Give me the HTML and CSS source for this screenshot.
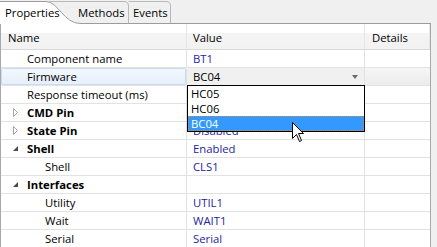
FILE: index.html
```html
<!DOCTYPE html>
<html>
<head>
<meta charset="utf-8">
<link rel="stylesheet" href="styles.css">
</head>
<body>
<div class="tabs">
  <svg class="tab-shapes" width="437" height="24" viewBox="0 0 437 24">
    <path d="M44 1.5 H124 Q128.5 1.5 128.5 6 V23.5" fill="none" stroke="#b8b8b8"/>
    <path d="M128.5 1.5 H166 Q170.5 1.5 170.5 6 V23.5" fill="none" stroke="#b8b8b8"/>
    <path d="M0 24 V1 H46 C58 1 64 23 80 23.5 V24 Z" fill="#ffffff"/>
    <path d="M0 1.5 H46 C58 1.5 64 23.5 80 23.5 H431" fill="none" stroke="#9c9c9c"/>
  </svg>
  <div class="tab tab-props">Properties</div>
  <div class="tab tab-methods">Methods</div>
  <div class="tab tab-events">Events</div>
</div>
<div class="panel">
  <div class="row hdr">
    <div class="cell name">Name</div>
    <div class="cell val">Value</div>
    <div class="cell det">Details</div>
  </div>
  <div class="row">
    <div class="cell name l1">Component name</div>
    <div class="cell val">BT1</div>
    <div class="cell det"></div>
  </div>
  <div class="row sel">
    <div class="cell name l1">Firmware</div>
    <div class="cell val combo"><span>BC04</span><span class="arrow"></span></div>
    <div class="cell det"></div>
  </div>
  <div class="row">
    <div class="cell name l1">Response timeout (ms)</div>
    <div class="cell val"></div>
    <div class="cell det"></div>
  </div>
  <div class="row">
    <div class="cell name l0 bold"><svg class="tw" width="8" height="9" viewBox="0 0 8 9"><path d="M1.5 0.5 L5.5 4.5 L1.5 8.5 Z" fill="none" stroke="#a6a6a6"/></svg>CMD Pin</div>
    <div class="cell val"></div>
    <div class="cell det"></div>
  </div>
  <div class="row">
    <div class="cell name l0 bold"><svg class="tw" width="8" height="9" viewBox="0 0 8 9"><path d="M1.5 0.5 L5.5 4.5 L1.5 8.5 Z" fill="none" stroke="#a6a6a6"/></svg>State Pin</div>
    <div class="cell val">Disabled</div>
    <div class="cell det"></div>
  </div>
  <div class="row">
    <div class="cell name l0 bold"><svg class="tw" width="8" height="9" viewBox="0 0 8 9"><path d="M6 2 L6 7 L1 7 Z" fill="#4a4a4a"/></svg>Shell</div>
    <div class="cell val">Enabled</div>
    <div class="cell det"></div>
  </div>
  <div class="row">
    <div class="cell name l2">Shell</div>
    <div class="cell val">CLS1</div>
    <div class="cell det"></div>
  </div>
  <div class="row">
    <div class="cell name l0 bold"><svg class="tw" width="8" height="9" viewBox="0 0 8 9"><path d="M6 2 L6 7 L1 7 Z" fill="#4a4a4a"/></svg>Interfaces</div>
    <div class="cell val"></div>
    <div class="cell det"></div>
  </div>
  <div class="row">
    <div class="cell name l2">Utility</div>
    <div class="cell val">UTIL1</div>
    <div class="cell det"></div>
  </div>
  <div class="row">
    <div class="cell name l2">Wait</div>
    <div class="cell val">WAIT1</div>
    <div class="cell det"></div>
  </div>
  <div class="row">
    <div class="cell name l2">Serial</div>
    <div class="cell val">Serial</div>
    <div class="cell det"></div>
  </div>

  <div class="dropdown">
    <div class="opt">HC05</div>
    <div class="opt">HC06</div>
    <div class="opt cur">BC04</div>
  </div>
  <svg class="cursor" width="13" height="21" viewBox="0 0 13 21">
    <path d="M0.5 0.5 L0.5 16.5 L4.5 12.5 L7.5 19.5 L9.5 18.5 L6.5 11.5 L11.5 11.5 Z" fill="#ffffff" stroke="#000000" stroke-linejoin="miter"/>
  </svg>
</div>
</body>
</html>
```
FILE: styles.css
```css
html, body {
  margin: 0;
  padding: 0;
}
body {
  background: #f0f0f0;
  font-family: "Segoe UI", "Open Sans", "DejaVu Sans", sans-serif;
  font-size: 11.3px;
  color: #000;
  width: 437px;
  height: 247px;
  overflow: hidden;
}
.tabs {
  position: relative;
  height: 24px;
  display: flex;
}
.tab-shapes {
  position: absolute;
  left: 0;
  top: 0;
}
.tab {
  position: relative;
  height: 24px;
  line-height: 26px;
  box-sizing: border-box;
}
.tab-props {
  width: 78px;
  padding-left: 5px;
}
.tab-methods {
  width: 55px;
}
.tab-events {
  width: 45px;
}
.panel {
  position: relative;
  width: 431px;
  height: 223px;
  box-sizing: border-box;
  border-left: 1px solid #a8a8a8;
  border-right: 1px solid #a8a8a8;
  background: #fff;
  overflow: hidden;
}
.row {
  display: grid;
  grid-template-columns: 186px 178px 65px;
  height: 18px;
}
.cell {
  box-sizing: border-box;
  border-bottom: 1px solid #e2e2e2;
  border-right: 1px solid #e2e2e2;
  line-height: 17px;
  white-space: nowrap;
  overflow: hidden;
  display: flex;
  align-items: center;
}
.cell.det {
  border-right: none;
}
.val {
  padding-left: 6px;
  color: #25259e;
}
.hdr {
  height: 26px;
}
.hdr .cell {
  background: linear-gradient(to bottom, #ffffff 0, #ffffff 34%, #f4f4f4 38%, #f2f2f2 100%);
  border-bottom: 1px solid #d8d8d8;
  border-right: 1px solid #e6e6e6;
  color: #000;
  padding-top: 2px;
}
.hdr .name {
  padding-left: 7px;
}
.hdr .val {
  padding-left: 6px;
}
.hdr .det {
  padding-left: 7px;
}
.l1 {
  padding-left: 26px;
}
.l0 {
  padding-left: 11px;
}
.l2 {
  padding-left: 44px;
}
.bold {
  font-weight: bold;
}
.tw {
  flex: none;
  margin-right: 7px;
}
.sel .name {
  background: linear-gradient(to bottom, #f4f8fd, #e4eefa);
  box-shadow: inset 0 0 0 1px #cadcf2;
  border-radius: 2px;
}
.sel .val {
  background: #f0f0f0;
  color: #000;
  justify-content: space-between;
  padding-right: 6px;
}
.sel .det {
  background: linear-gradient(to bottom, #f6f6f6, #ececec);
}
.arrow {
  width: 0;
  height: 0;
  border-left: 3.5px solid transparent;
  border-right: 3.5px solid transparent;
  border-top: 4px solid #6a6a6a;
}
.dropdown {
  position: absolute;
  left: 186px;
  top: 61px;
  width: 178px;
  box-sizing: border-box;
  border: 1px solid #000;
  background: #fff;
}
.opt {
  height: 15px;
  line-height: 15px;
  padding-left: 3px;
  box-sizing: border-box;
  color: #000;
}
.opt.cur {
  background: #3399ff;
  color: #fff;
  border: 1px dotted #d8893a;
  padding-left: 2px;
  line-height: 13px;
}
.cursor {
  position: absolute;
  left: 291px;
  top: 98px;
}
```
